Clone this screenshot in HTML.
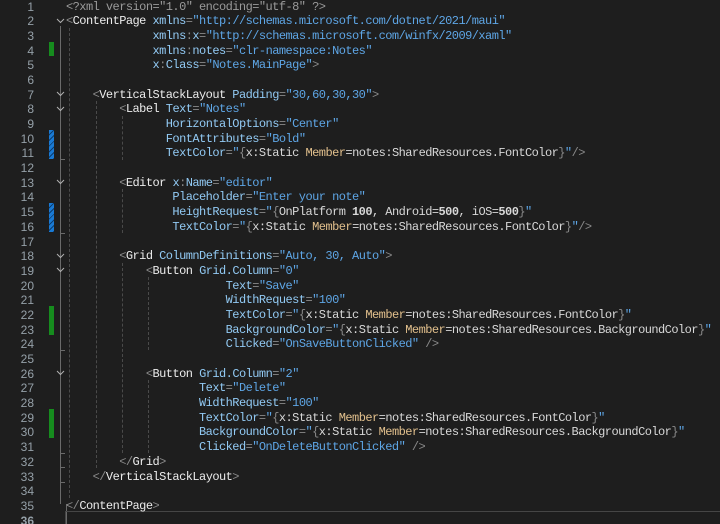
<!DOCTYPE html>
<html><head><meta charset="utf-8"><style>
html,body{margin:0;padding:0;background:#1e1e1e;width:720px;height:524px;overflow:hidden;position:relative}
.code{position:absolute;left:66px;top:-0.5px;font-family:"Liberation Mono",monospace;font-size:12px;letter-spacing:-0.55px;line-height:14.69px;white-space:pre;color:#d4d4d4}
.nums{position:absolute;left:0;width:34px;top:-0.5px;text-align:right;font-family:"Liberation Sans",sans-serif;font-size:12px;line-height:14.69px;color:#95a0a8;white-space:pre}
.p{color:#8a8a8a}.t{color:#ececec}.a{color:#92caf4}.v{color:#5ea6e6}.m{color:#d8d8d8}.k{color:#e2c08d}.x{color:#9a9a9a}
.g{position:absolute;width:0;border-left:1px dashed #4a4a4a}
.mk{position:absolute;left:49px;width:5px}
.gr{background:#168c1e}
.bl{background:repeating-linear-gradient(135deg,#1a7ad4 0 3px,#0a3d70 3px 4px)}
.fold{position:absolute;left:60px;width:1px;background:#6a6a6a}
.tick{position:absolute;left:60px;width:5px;height:1px;background:#6a6a6a}
.ch{position:absolute;left:56px;width:9px;height:6px}
.cur{position:absolute;left:65px;top:511px;width:660px;height:16px;border:1px solid #464646;box-sizing:border-box}
</style></head><body>
<div class="nums">1
2
3
4
5
6
7
8
9
10
11
12
13
14
15
16
17
18
19
20
21
22
23
24
25
26
27
28
29
30
31
32
33
34
35
<b>36</b></div>

<div class="mk gr" style="top:42px;height:14px"></div>
<div class="mk bl" style="top:130px;height:29px"></div>
<div class="mk bl" style="top:203px;height:29px"></div>
<div class="mk gr" style="top:306px;height:29px"></div>
<div class="mk gr" style="top:409px;height:29px"></div>

<div class="fold" style="top:26px;height:478px"></div>
<div class="tick" style="top:159px"></div>
<div class="tick" style="top:233px"></div>
<div class="tick" style="top:350px"></div>
<div class="tick" style="top:453px"></div>
<div class="tick" style="top:467px"></div>
<div class="tick" style="top:482px"></div>
<div class="fold" style="top:504px;height:20px;left:66px"></div>

<svg class="ch" style="top:18px" viewBox="0 0 9 6"><path d="M1 1 L4.5 4.5 L8 1" fill="none" stroke="#b0b0b0" stroke-width="1"/></svg>
<svg class="ch" style="top:91px" viewBox="0 0 9 6"><path d="M1 1 L4.5 4.5 L8 1" fill="none" stroke="#b0b0b0" stroke-width="1"/></svg>
<svg class="ch" style="top:106px" viewBox="0 0 9 6"><path d="M1 1 L4.5 4.5 L8 1" fill="none" stroke="#b0b0b0" stroke-width="1"/></svg>
<svg class="ch" style="top:179px" viewBox="0 0 9 6"><path d="M1 1 L4.5 4.5 L8 1" fill="none" stroke="#b0b0b0" stroke-width="1"/></svg>
<svg class="ch" style="top:253px" viewBox="0 0 9 6"><path d="M1 1 L4.5 4.5 L8 1" fill="none" stroke="#b0b0b0" stroke-width="1"/></svg>
<svg class="ch" style="top:267px" viewBox="0 0 9 6"><path d="M1 1 L4.5 4.5 L8 1" fill="none" stroke="#b0b0b0" stroke-width="1"/></svg>
<svg class="ch" style="top:370px" viewBox="0 0 9 6"><path d="M1 1 L4.5 4.5 L8 1" fill="none" stroke="#b0b0b0" stroke-width="1"/></svg>

<div class="g" style="left:69px;top:28px;height:470px"></div>
<div class="g" style="left:96px;top:101px;height:367px"></div>
<div class="g" style="left:122px;top:116px;height:44px"></div>
<div class="g" style="left:122px;top:189px;height:44px"></div>
<div class="g" style="left:122px;top:263px;height:190px"></div>
<div class="g" style="left:148px;top:277px;height:73px"></div>
<div class="g" style="left:148px;top:380px;height:73px"></div>

<div class="cur"></div>

<div class="code"><span class="x">&lt;?xml version="1.0" encoding="utf-8" ?&gt;</span>
<span class="p">&lt;</span><span class="t">ContentPage</span> <span class="a">xmlns</span><span class="p">=</span><span class="v">"http://schemas.microsoft.com/dotnet/2021/maui"</span>
             <span class="a">xmlns</span><span class="p">:</span><span class="a">x</span><span class="p">=</span><span class="v">"http://schemas.microsoft.com/winfx/2009/xaml"</span>
             <span class="a">xmlns</span><span class="p">:</span><span class="a">notes</span><span class="p">=</span><span class="v">"clr-namespace:Notes"</span>
             <span class="a">x</span><span class="p">:</span><span class="a">Class</span><span class="p">=</span><span class="v">"Notes.MainPage"</span><span class="p">&gt;</span>

    <span class="p">&lt;</span><span class="t">VerticalStackLayout</span> <span class="a">Padding</span><span class="p">=</span><span class="v">"30,60,30,30"</span><span class="p">&gt;</span>
        <span class="p">&lt;</span><span class="t">Label</span> <span class="a">Text</span><span class="p">=</span><span class="v">"Notes"</span>
               <span class="a">HorizontalOptions</span><span class="p">=</span><span class="v">"Center"</span>
               <span class="a">FontAttributes</span><span class="p">=</span><span class="v">"Bold"</span>
               <span class="a">TextColor</span><span class="p">=</span><span class="v">"</span><span class="p">{</span><span class="m">x:Static</span> <span class="k">Member</span><span class="m">=notes:SharedResources.FontColor</span><span class="p">}</span><span class="v">"</span><span class="p">/&gt;</span>

        <span class="p">&lt;</span><span class="t">Editor</span> <span class="a">x</span><span class="p">:</span><span class="a">Name</span><span class="p">=</span><span class="v">"editor"</span>
                <span class="a">Placeholder</span><span class="p">=</span><span class="v">"Enter your note"</span>
                <span class="a">HeightRequest</span><span class="p">=</span><span class="v">"</span><span class="p">{</span><span class="m">OnPlatform <b>100</b>, Android=<b>500</b>, iOS=<b>500</b></span><span class="p">}</span><span class="v">"</span>
                <span class="a">TextColor</span><span class="p">=</span><span class="v">"</span><span class="p">{</span><span class="m">x:Static</span> <span class="k">Member</span><span class="m">=notes:SharedResources.FontColor</span><span class="p">}</span><span class="v">"</span><span class="p">/&gt;</span>

        <span class="p">&lt;</span><span class="t">Grid</span> <span class="a">ColumnDefinitions</span><span class="p">=</span><span class="v">"Auto, 30, Auto"</span><span class="p">&gt;</span>
            <span class="p">&lt;</span><span class="t">Button</span> <span class="a">Grid.Column</span><span class="p">=</span><span class="v">"0"</span>
                        <span class="a">Text</span><span class="p">=</span><span class="v">"Save"</span>
                        <span class="a">WidthRequest</span><span class="p">=</span><span class="v">"100"</span>
                        <span class="a">TextColor</span><span class="p">=</span><span class="v">"</span><span class="p">{</span><span class="m">x:Static</span> <span class="k">Member</span><span class="m">=notes:SharedResources.FontColor</span><span class="p">}</span><span class="v">"</span>
                        <span class="a">BackgroundColor</span><span class="p">=</span><span class="v">"</span><span class="p">{</span><span class="m">x:Static</span> <span class="k">Member</span><span class="m">=notes:SharedResources.BackgroundColor</span><span class="p">}</span><span class="v">"</span>
                        <span class="a">Clicked</span><span class="p">=</span><span class="v">"OnSaveButtonClicked"</span> <span class="p">/&gt;</span>

            <span class="p">&lt;</span><span class="t">Button</span> <span class="a">Grid.Column</span><span class="p">=</span><span class="v">"2"</span>
                    <span class="a">Text</span><span class="p">=</span><span class="v">"Delete"</span>
                    <span class="a">WidthRequest</span><span class="p">=</span><span class="v">"100"</span>
                    <span class="a">TextColor</span><span class="p">=</span><span class="v">"</span><span class="p">{</span><span class="m">x:Static</span> <span class="k">Member</span><span class="m">=notes:SharedResources.FontColor</span><span class="p">}</span><span class="v">"</span>
                    <span class="a">BackgroundColor</span><span class="p">=</span><span class="v">"</span><span class="p">{</span><span class="m">x:Static</span> <span class="k">Member</span><span class="m">=notes:SharedResources.BackgroundColor</span><span class="p">}</span><span class="v">"</span>
                    <span class="a">Clicked</span><span class="p">=</span><span class="v">"OnDeleteButtonClicked"</span> <span class="p">/&gt;</span>
        <span class="p">&lt;/</span><span class="t">Grid</span><span class="p">&gt;</span>
    <span class="p">&lt;/</span><span class="t">VerticalStackLayout</span><span class="p">&gt;</span>

<span class="p">&lt;/</span><span class="t">ContentPage</span><span class="p">&gt;</span>
</div>
</body></html>
